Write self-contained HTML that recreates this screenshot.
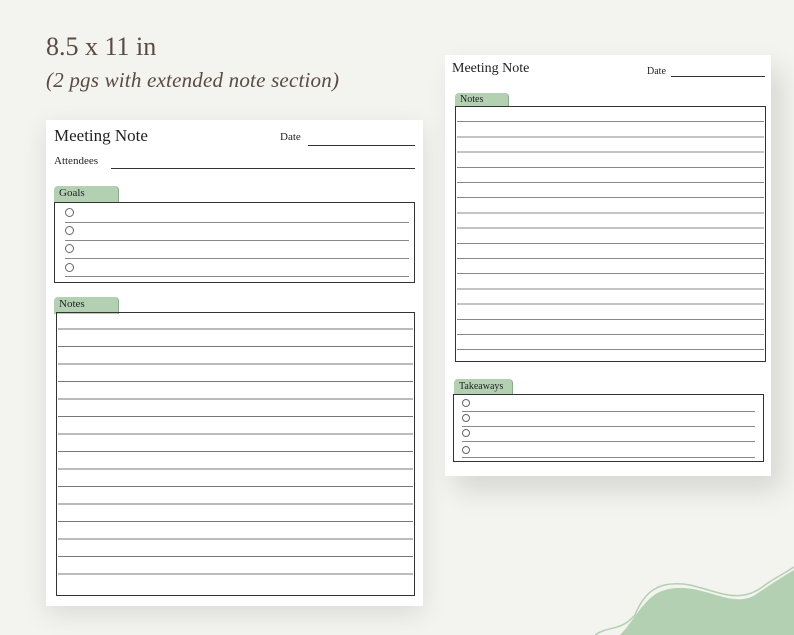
<!DOCTYPE html>
<html><head><meta charset="utf-8"><style>
body{margin:0;width:794px;height:635px;background:#f3f3ef;position:relative;overflow:hidden;font-family:"Liberation Serif",serif;color:#222}
.a{position:absolute}
.page{position:absolute;background:#fff;box-shadow:0 8px 24px rgba(0,0,0,0.10)}
.tab{position:absolute;background:#b3d0b3;border-radius:4px 4px 0 0;font-size:11px;padding-left:5px;box-sizing:border-box;line-height:15px;color:#222;border-right:1px solid #8aa88a}
.box{position:absolute;border:1.3px solid #333;box-sizing:border-box}
.ln{position:absolute;height:1px;background:#888}
.c{position:absolute;width:9px;height:9px;border:1px solid #666;border-radius:50%;box-sizing:border-box}
</style></head><body>
<div class="a" style="left:46px;top:32px;font-size:26px;color:#5a4a42">8.5 x 11 in</div>
<div class="a" style="left:46px;top:68px;font-size:21px;font-style:italic;color:#5a4a42;letter-spacing:0.2px">(2 pgs with extended note section)</div>

<svg class="a" style="left:590px;top:540px" width="204" height="95" viewBox="0 0 204 95">
<path d="M30 95 C45 80 55 55 75 50 C110 40 140 70 165 55 C180 45 195 35 204 30 L204 95 Z" fill="#b3d0b3"/>
<path d="M5 95 C20 85 30 92 45 75 C55 50 70 40 100 45 C130 52 150 65 175 45 C185 38 195 33 204 27" fill="none" stroke="#b3d0b3" stroke-width="1.5"/>
</svg>

<!-- left page -->
<div class="page" style="left:46px;top:120px;width:377px;height:486px"></div>
<div class="a" style="left:54px;top:126px;font-size:17px">Meeting Note</div>
<div class="a" style="left:280px;top:131px;font-size:11px">Date</div>
<div class="ln" style="left:308px;top:145px;width:107px;background:#333"></div>
<div class="a" style="left:54px;top:155px;font-size:11px">Attendees</div>
<div class="ln" style="left:111px;top:168px;width:304px;background:#333"></div>

<div class="tab" style="left:54px;top:186px;width:65px;height:17px">Goals</div>
<div class="box" style="left:54px;top:202px;width:361px;height:81px"></div>
<div class="c" style="left:65px;top:208px"></div><div class="ln" style="left:65px;top:222px;width:344px"></div>
<div class="c" style="left:65px;top:226px"></div><div class="ln" style="left:65px;top:240px;width:344px"></div>
<div class="c" style="left:65px;top:244px"></div><div class="ln" style="left:65px;top:258px;width:344px"></div>
<div class="c" style="left:65px;top:263px"></div><div class="ln" style="left:65px;top:276px;width:344px"></div>

<div class="tab" style="left:54px;top:297px;width:65px;height:17px">Notes</div>
<div class="box" style="left:56px;top:312px;width:359px;height:284px"></div>
<div class="a" style="left:58px;top:312px;width:355px;height:270px;background:repeating-linear-gradient(to bottom,transparent 0,transparent 16.5px,#777 16.5px,#777 17.5px)"></div>

<!-- right page -->
<div class="page" style="left:445px;top:55px;width:326px;height:421px;box-shadow:10px 14px 26px rgba(0,0,0,0.12)"></div>
<div class="a" style="left:452px;top:61px;font-size:14px">Meeting Note</div>
<div class="a" style="left:647px;top:66px;font-size:10px">Date</div>
<div class="ln" style="left:671px;top:76px;width:94px;background:#333"></div>
<div class="tab" style="left:455px;top:93px;width:54px;height:14px;font-size:10px;line-height:14px">Notes</div>
<div class="box" style="left:455px;top:106px;width:311px;height:256px"></div>
<div class="a" style="left:457px;top:107px;width:307px;height:245px;background:repeating-linear-gradient(to bottom,transparent 0,transparent 14.2px,#888 14.2px,#888 15.2px)"></div>

<div class="tab" style="left:454px;top:379px;width:59px;height:16px;font-size:10px;line-height:16px">Takeaways</div>
<div class="box" style="left:453px;top:394px;width:311px;height:68px"></div>
<div class="c" style="left:462px;top:399px;width:8px;height:8px"></div><div class="ln" style="left:462px;top:411px;width:293px"></div>
<div class="c" style="left:462px;top:414px;width:8px;height:8px"></div><div class="ln" style="left:462px;top:426px;width:293px"></div>
<div class="c" style="left:462px;top:429px;width:8px;height:8px"></div><div class="ln" style="left:462px;top:441px;width:293px"></div>
<div class="c" style="left:462px;top:446px;width:8px;height:8px"></div><div class="ln" style="left:462px;top:457px;width:293px"></div>
</body></html>
